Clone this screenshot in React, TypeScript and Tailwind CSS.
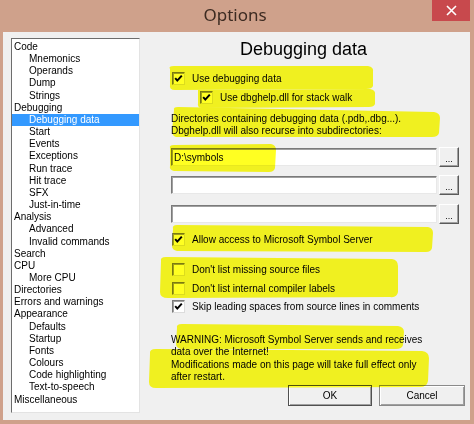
import React from "react";

const font = "font-['Liberation_Sans',Arial,sans-serif]";

const tree: [string, number][] = [
  ["Code", 0],
  ["Mnemonics", 1],
  ["Operands", 1],
  ["Dump", 1],
  ["Strings", 1],
  ["Debugging", 0],
  ["Debugging data", 1],
  ["Start", 1],
  ["Events", 1],
  ["Exceptions", 1],
  ["Run trace", 1],
  ["Hit trace", 1],
  ["SFX", 1],
  ["Just-in-time", 1],
  ["Analysis", 0],
  ["Advanced", 1],
  ["Invalid commands", 1],
  ["Search", 0],
  ["CPU", 0],
  ["More CPU", 1],
  ["Directories", 0],
  ["Errors and warnings", 0],
  ["Appearance", 0],
  ["Defaults", 1],
  ["Startup", 1],
  ["Fonts", 1],
  ["Colours", 1],
  ["Code highlighting", 1],
  ["Text-to-speech", 1],
  ["Miscellaneous", 0],
];

function Check({ checked }: { checked: boolean }) {
  return (
    <div className="w-[13px] h-[13px] shrink-0 bg-white border border-t-[#7a7a7a] border-l-[#7a7a7a] border-r-[#dcdcdc] border-b-[#dcdcdc] shadow-[inset_1px_1px_0_#a0a0a0] flex items-center justify-center">
      {checked && (
        <svg width="11" height="11" viewBox="0 0 11 11">
          <path d="M2.2 5.2 L4.3 7.6 L8.8 2.6" stroke="#000" strokeWidth="2" fill="none" />
        </svg>
      )}
    </div>
  );
}

function CheckRow({ checked, label, ml, mt }: { checked: boolean; label: string; ml: string; mt: string }) {
  return (
    <div className={`flex items-center h-[13px] gap-[7px] ${ml} ${mt}`}>
      <Check checked={checked} />
      <span className="text-[10px] leading-[13px] whitespace-nowrap text-black">{label}</span>
    </div>
  );
}

function PathRow({ value, mt }: { value: string; mt: string }) {
  return (
    <div className={`flex items-center h-[20px] gap-[2px] ${mt}`}>
      <div className="w-[266px] h-[18px] bg-white border border-t-[#7a7a7a] border-l-[#7a7a7a] border-r-[#e8e8e8] border-b-[#e8e8e8] shadow-[inset_1px_1px_0_#a0a0a0] flex items-center pl-[2px] text-[10px] text-black">
        {value}
      </div>
      <div className="w-[20px] h-[20px] bg-[#f0f0f0] border border-t-[#ffffff] border-l-[#ffffff] border-r-[#5a5a5a] border-b-[#5a5a5a] shadow-[inset_-1px_-1px_0_#a0a0a0] flex items-end justify-center pb-[2px] text-[9px] leading-[9px] text-black">
        ...
      </div>
    </div>
  );
}

function Btn({ label, w, dark }: { label: string; w: string; dark?: boolean }) {
  return (
    <div
      className={`${w} h-[21px] flex items-center justify-center text-[10px] text-black bg-[#f0f0f0] border ${
        dark ? "border-[#505050]" : "border-[#8a8a8a]"
      } shadow-[inset_1px_1px_0_#ffffff,inset_-1px_-1px_0_#a0a0a0]`}
    >
      {label}
    </div>
  );
}

export default function App() {
  return (
    <div className={`relative w-[474px] h-[424px] bg-[#cfa18b] flex flex-col overflow-hidden ${font}`}>
      {/* Title bar */}
      <div className="h-[32px] flex items-start">
        <div className="flex-1" />
        <div className="pt-[3px] text-[17px] leading-[24px] text-[#3d2b22] font-['Noto_Sans',sans-serif]">Options</div>
        <div className="flex-1 flex justify-end pr-[4px]">
          <div className="w-[38px] h-[21px] bg-[#c8494d] flex items-center justify-center">
            <svg width="11" height="11" viewBox="0 0 11 11">
              <path d="M1 1 L10 10 M10 1 L1 10" stroke="#fff" strokeWidth="1.6" />
            </svg>
          </div>
        </div>
      </div>

      {/* Client area */}
      <div className="ml-[3px] mr-[4px] h-[388px] bg-[#f0f0f0] flex">
        {/* Tree */}
        <div className="mt-[6px] ml-[8px] w-[129px] h-[375px] bg-white border border-t-[#6d6d6d] border-l-[#6d6d6d] border-r-[#e3e3e3] border-b-[#e3e3e3] pt-[2px] flex flex-col">
          {tree.map(([t, lvl], i) => {
            const sel = t === "Debugging data";
            return (
              <div
                key={i}
                className={`h-[12.17px] leading-[12.17px] text-[10px] whitespace-nowrap ${
                  lvl ? "pl-[17px]" : "pl-[2px]"
                } ${sel ? "bg-[#3399ff] text-white" : "text-black"}`}
              >
                {t}
              </div>
            );
          })}
        </div>

        {/* Right panel */}
        <div className="flex-1 flex flex-col pl-[31px]">
          <div className="mt-[7px] ml-[69px] h-[21px] text-[18px] leading-[21px] text-black">Debugging data</div>
          <CheckRow checked label="Use debugging data" ml="ml-[1px]" mt="mt-[12px]" />
          <CheckRow checked label="Use dbghelp.dll for stack walk" ml="ml-[29px]" mt="mt-[6px]" />
          <div className="mt-[9px] text-[10px] leading-[12px] text-black">
            Directories containing debugging data (.pdb,.dbg...).
            <br />
            Dbghelp.dll will also recurse into subdirectories:
          </div>
          <PathRow value="D:\symbols" mt="mt-[10px]" />
          <PathRow value="" mt="mt-[8px]" />
          <PathRow value="" mt="mt-[9px]" />
          <CheckRow checked label="Allow access to Microsoft Symbol Server" ml="ml-[1px]" mt="mt-[9px]" />
          <CheckRow checked={false} label="Don't list missing source files" ml="ml-[1px]" mt="mt-[17px]" />
          <CheckRow checked={false} label="Don't list internal compiler labels" ml="ml-[1px]" mt="mt-[6px]" />
          <CheckRow checked label="Skip leading spaces from source lines in comments" ml="ml-[1px]" mt="mt-[5px]" />
          <div className="mt-[21px] text-[10px] leading-[12.4px] text-black">
            WARNING: Microsoft Symbol Server sends and receives
            <br />
            data over the Internet!
            <br />
            Modifications made on this page will take full effect only
            <br />
            after restart.
          </div>
          <div className="mt-[1px] flex justify-end gap-[7px] pr-[5px]">
            <Btn label="OK" w="w-[84px]" dark />
            <Btn label="Cancel" w="w-[86px]" />
          </div>
        </div>
      </div>

      {/* Yellow marker highlights */}
      <svg
        className="absolute inset-0 pointer-events-none mix-blend-multiply"
        width="474"
        height="424"
        viewBox="0 0 474 424"
      >
        <g fill="#ffff22">
          <path d="M170 69 Q168 66 174 66 L368 66 Q374 67 373 72 L373 86 Q372 89 366 89 L175 90 Q169 90 170 85 Z" />
          <path d="M198 90 L370 89 Q376 90 375 95 L375 104 Q374 107 369 107 L202 108 Q197 108 198 103 Z" />
          <path d="M174 110 Q173 107 178 107 L434 112 Q440 113 440 118 L439 133 Q438 137 432 137 L176 137 Q172 136 172 131 Z" />
          <path d="M170 148 Q169 145 174 145 L271 144 Q276 145 276 150 L275 168 Q274 172 269 172 L174 171 Q169 170 170 166 Z" />
          <path d="M173 229 Q172 225 177 225 L428 227 Q433 228 433 233 L432 248 Q431 252 426 252 L177 251 Q172 250 172 246 Z" />
          <path d="M161 261 Q160 257 166 257 L392 259 Q398 260 398 266 L398 292 Q397 298 390 297 L168 298 Q160 298 160 292 Z" />
          <path d="M177 328 Q176 324 182 324 L398 326 Q404 327 404 332 L403 345 Q402 349 396 349 L181 349 Q176 348 176 344 Z" />
          <path d="M150 354 Q149 349 156 349 L422 351 Q429 352 429 358 L428 381 Q427 387 420 387 L156 388 Q149 388 149 382 Z" />
        </g>
      </svg>
    </div>
  );
}
